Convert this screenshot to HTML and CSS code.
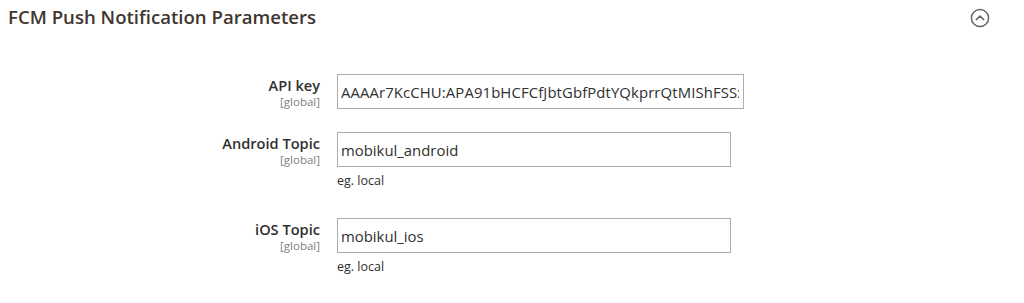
FILE: index.html
```html
<!DOCTYPE html>
<html>
<head>
<meta charset="utf-8">
<link rel="stylesheet" href="styles.css">
</head>
<body>
<div class="section">
  <div class="header">
    <h2 class="title">FCM Push Notification Parameters</h2>
    <span class="toggle">
      <svg width="20" height="20" viewBox="0 0 20 20"><circle cx="10" cy="10" r="8.6" fill="none" stroke="#666" stroke-width="1.5"/><path d="M6.3 11.6 L10 8 L13.7 11.6" fill="none" stroke="#666" stroke-width="1.6" stroke-linecap="round" stroke-linejoin="round"/></svg>
    </span>
  </div>
  <div class="form">
    <div class="row">
      <div class="label"><span class="name">API key</span><span class="scope">[global]</span></div>
      <div class="control"><input class="input wide" type="text" value="AAAAr7KcCHU:APA91bHCFCfJbtGbfPdtYQkprrQtMIShFSSxk3Lq"></div>
    </div>
    <div class="row">
      <div class="label"><span class="name">Android Topic</span><span class="scope">[global]</span></div>
      <div class="control"><input class="input" type="text" value="mobikul_android"><div class="note">eg. local</div></div>
    </div>
    <div class="row">
      <div class="label"><span class="name">iOS Topic</span><span class="scope">[global]</span></div>
      <div class="control"><input class="input" type="text" value="mobikul_ios"><div class="note">eg. local</div></div>
    </div>
  </div>
</div>
</body>
</html>
```
FILE: styles.css
```css
html, body {
  margin: 0;
  padding: 0;
  background: #fff;
}
body {
  font-family: "Open Sans", "Liberation Sans", sans-serif;
  color: #303030;
}
.header {
  display: flex;
  align-items: flex-start;
  justify-content: space-between;
  padding: 5px 34px 0 8px;
}
.title {
  margin: 0;
  font-size: 18.6px;
  line-height: 24px;
  font-weight: 600;
  color: #41362f;
}
.toggle {
  display: block;
  margin-top: 3px;
}
.toggle svg {
  display: block;
}
.form {
  padding-top: 45px;
}
.row {
  display: grid;
  grid-template-columns: 320px auto;
  column-gap: 17px;
  margin-bottom: 23px;
}
.label {
  display: flex;
  flex-direction: column;
  align-items: flex-end;
  padding-top: 2px;
}
.name {
  font-size: 14.6px;
  font-weight: 600;
  line-height: 19px;
  color: #303030;
}
.scope {
  font-size: 11.5px;
  line-height: 14px;
  color: #808080;
}
.control {
  display: flex;
  flex-direction: column;
}
.input {
  box-sizing: border-box;
  width: 394px;
  height: 35px;
  border: 1px solid #adadad;
  padding: 0 3px;
  margin: 0;
  font-family: "Open Sans", "Liberation Sans", sans-serif;
  font-size: 14.9px;
  color: #303030;
  background: #fff;
  outline: none;
}
.input.wide {
  width: 407px;
  padding-right: 4px;
  letter-spacing: 0.1px;
}
.note {
  font-size: 12.5px;
  line-height: 18px;
  margin-top: 5px;
  margin-bottom: 5px;
  color: #303030;
}
```
